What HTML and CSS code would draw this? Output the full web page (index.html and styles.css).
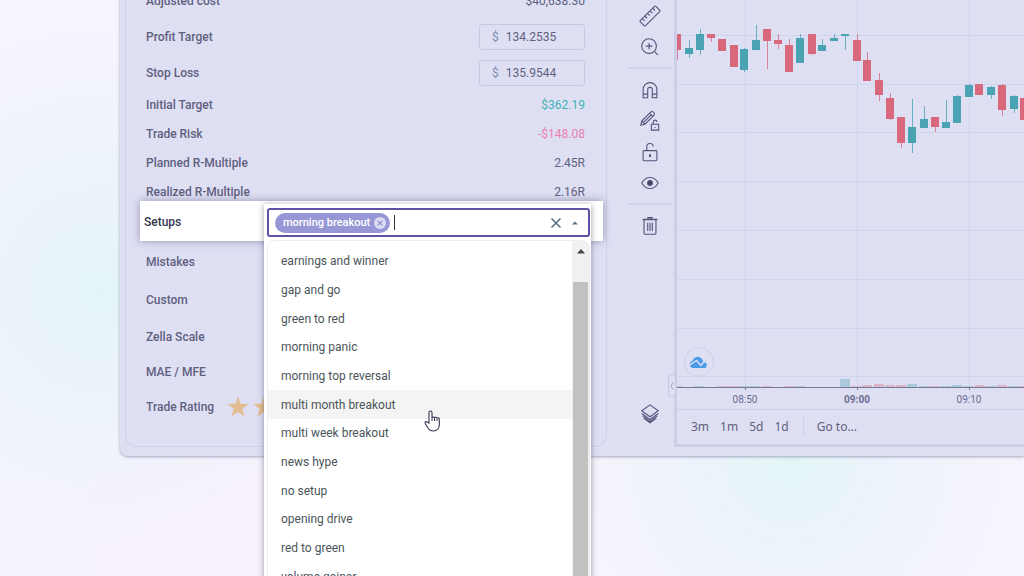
FILE: index.html
```
<!DOCTYPE html>
<html lang="en">
<head>
    <meta charset="UTF-8">
    <meta name="viewport" content="width=device-width, initial-scale=1.0">
    <title>Trade details</title>
    <link rel="stylesheet" href="styles.css">
</head>
<body>
    <div class="app">
        <section class="details">
            <div class="row">
                <span class="label">Adjusted cost</span>
                <span class="value">$40,638.30</span>
            </div>
            <div class="row row-input">
                <label class="label" for="profitTarget">Profit Target</label>
                <div class="money"><span>$</span><input type="text" id="profitTarget" value="134.2535"></div>
            </div>
            <div class="row row-input">
                <label class="label" for="stopLoss">Stop Loss</label>
                <div class="money"><span>$</span><input type="text" id="stopLoss" value="135.9544"></div>
            </div>
            <div class="row">
                <span class="label">Initial Target</span>
                <span class="value positive">$362.19</span>
            </div>
            <div class="row">
                <span class="label">Trade Risk</span>
                <span class="value negative">-$148.08</span>
            </div>
            <div class="row">
                <span class="label">Planned R-Multiple</span>
                <span class="value">2.45R</span>
            </div>
            <div class="row">
                <span class="label">Realized R-Multiple</span>
                <span class="value">2.16R</span>
            </div>

            <div class="setups">
                <label class="setups-label" for="setupSearch">Setups</label>
                <div class="picker">
                    <div class="picker-control">
                        <span class="chip">morning breakout
                            <button class="chip-remove" aria-label="Remove morning breakout">
                                <svg viewBox="0 0 12 12" width="12" height="12"><circle cx="6" cy="6" r="6" fill="#dcdcf5"/><path d="M3.6 3.6l4.8 4.8M8.4 3.6L3.6 8.4" stroke="#8f8fd0" stroke-width="1.3"/></svg>
                            </button>
                        </span>
                        <span class="caret"></span>
                        <input type="text" id="setupSearch" class="picker-input" autocomplete="off">
                        <button class="icon-button" aria-label="Clear">
                            <svg viewBox="0 0 12 12" width="12" height="12"><path d="M1.5 1.5l9 9M10.5 1.5l-9 9" stroke="#5b7080" stroke-width="1.6"/></svg>
                        </button>
                        <button class="icon-button" aria-label="Close list">
                            <svg viewBox="0 0 12 12" width="12" height="12"><path d="M3 7.5L6 4.5l3 3z" fill="#5b7080"/></svg>
                        </button>
                    </div>
                    <div class="picker-list">
                        <ul class="options" id="options" role="listbox" aria-label="Setups"></ul>
                        <div class="scrollbar">
                            <svg viewBox="0 0 10 6" width="10" height="6"><path d="M1 5.5L5 1l4 4.5z" fill="#444"/></svg>
                            <div class="thumb"></div>
                        </div>
                    </div>
                </div>
            </div>

            <div class="row row-tall"><span class="label">Mistakes</span></div>
            <div class="row row-tall"><span class="label">Custom</span></div>
            <div class="row row-field"><span class="label">Zella Scale</span></div>
            <div class="row row-mid"><span class="label">MAE / MFE</span></div>
            <div class="row row-field row-rating">
                <span class="label">Trade Rating</span>
                <div class="stars" id="stars"></div>
            </div>
        </section>

        <nav class="tools" aria-label="Drawing tools">
            <button class="tool" aria-label="Measure">
                <svg viewBox="0 0 24 24"><g transform="rotate(-45 12 12)"><rect x="0" y="8" width="24" height="8" rx="1.2"/><path d="M4 8v3.5M8 8v3.5M12 8v3.5M16 8v3.5M20 8v3.5"/></g></svg>
            </button>
            <button class="tool" aria-label="Zoom in">
                <svg viewBox="0 0 24 24"><circle cx="11" cy="11" r="8"/><path d="M17 17l3.500 3.500M11 7.500v7M7.500 11h7"/></svg>
            </button>
            <hr>
            <button class="tool" aria-label="Magnet">
                <svg viewBox="0 0 24 24"><path d="M4.500 20.500v-9a7.500 7.500 0 0 1 15 0v9h-5v-9a2.500 2.500 0 0 0-5 0v9zM4.500 16.500h5M14.500 16.500h5"/></svg>
            </button>
            <button class="tool" aria-label="Stay in drawing mode">
                <svg viewBox="0 0 24 24"><path d="M2 16.500l1-4.500L13 2q1.500-1 3 .5t.5 3L6.500 15.500zM3 12l3.500 3.500M11.500 3.500l3.500 3.500M4.700 13.800l8.500-8.500M13.500 15.500h8v6.500h-8zM15.500 15.500v-2.500a2 2 0 0 1 4 0M17.500 18.500v1"/></svg>
            </button>
            <button class="tool" aria-label="Lock drawings">
                <svg viewBox="0 0 24 24"><rect x="4.500" y="10.500" width="15" height="11" rx="1"/><path d="M8.500 10.500V6.500a3.500 3.500 0 0 1 7-.5"/><path d="M12 14.500v3" stroke-width="2.200"/></svg>
            </button>
            <button class="tool" aria-label="Hide drawings">
                <svg viewBox="0 0 24 24"><path d="M3 12c4.500-8 13.500-8 18 0-4.500 8-13.500 8-18 0z"/><circle cx="12" cy="12" r="2.600" fill="#3f3f63"/></svg>
            </button>
            <hr>
            <button class="tool" aria-label="Delete drawings">
                <svg viewBox="0 0 24 24"><path d="M4 5h16M9 3h6" stroke-width="1.700"/><path d="M5.500 5.500v14q0 1.500 1.500 1.500h10q1.500 0 1.500-1.500v-14M9.500 8.500v9M12 8.500v9M14.500 8.500v9"/></svg>
            </button>
            <button class="tool tool-last" aria-label="Object tree">
                <svg viewBox="0 0 24 24"><path d="M12 2l9 6.500-9 6.500-9-6.500z"/><path d="M3 11.500l9 6.500 9-6.500M4 14l8 6 8-6M5 16.500l7 5 7-5"/></svg>
            </button>
        </nav>

        <section class="chart">
            <button class="chart-handle" aria-label="Collapse panel">
                <svg viewBox="0 0 4 10" width="4" height="10"><path d="M3 1.500L1 5l2 3.500" fill="none" stroke="#a5a6c4"/></svg>
            </button>
            <svg class="plot" id="plot" role="img" aria-label="Price chart"></svg>
            <a class="chart-logo" href="#" aria-label="TradingView">
                <svg viewBox="0 0 20 12" width="20" height="12"><path d="M4 12A3.600 3.600 0 0 1 3.300 5 5.500 5.500 0 0 1 12.500 2.500L14 5a4 4 0 0 1 2.500 7z" fill="#4a9ce8"/><path d="M0 9.500l7.500-5 4.500 5 3-4 4 1" fill="none" stroke="#dedff3" stroke-width="1.400"/></svg>
            </a>
            <div class="ranges">
                <button>3m</button>
                <button>1m</button>
                <button>5d</button>
                <button>1d</button>
                <button class="goto">Go to...</button>
            </div>
        </section>
    </div>

    <script>
        const setups = [
            "earnings and winner", "gap and go", "green to red", "morning panic",
            "morning top reversal", "multi month breakout", "multi week breakout",
            "news hype", "no setup", "opening drive", "red to green", "volume gainer"
        ];
        const hovered = "multi month breakout";

        const pointer = `
            <svg class="pointer" viewBox="0 0 16 22" width="16" height="22">
                <path d="M5 13V2.500a1.500 1.500 0 0 1 3 0V8a1.300 1.300 0 0 1 2.500 0 1.300 1.300 0 0 1 2.500.5 1.200 1.200 0 0 1 2.300.5v6c0 3-2 6-6 6-3.500 0-4.500-1.500-6-4l-2-3.500c-.8-1.500.6-2.500 1.900-1.500z" fill="#fff" stroke="#34344e" stroke-width="1.100"/>
                <path d="M8 8v3M10.500 8.500V11M13 9v2" stroke="#34344e"/>
            </svg>`;

        document.getElementById('options').innerHTML = setups.map(name =>
            `<li role="option" class="option${name === hovered ? ' hovered' : ''}">${name}${name === hovered ? pointer : ''}</li>`
        ).join('');

        // Rating stars
        document.getElementById('stars').innerHTML = [1, 2, 3, 4, 5].map(n => `
            <button class="star" aria-label="Rate ${n}">
                <svg viewBox="0 0 22 22" width="22" height="22"><path d="M11 .5l2.600 7.300 7.900.2-6.200 4.800 2.200 7.700L11 16l-6.500 4.500 2.200-7.700L.5 8l7.900-.2z" fill="#e2bd90"/></svg>
            </button>`
        ).join('');

        // x, high, low, body top, body bottom, direction
        const candles = [
            [0, 34, 60, 34, 50, 'down'], [12, 40, 58, 48, 54, 'up'], [23, 29, 55, 34, 50, 'up'],
            [34, 34, 42, 34, 38, 'down'], [45, 39, 51, 39, 51, 'down'], [57, 45, 67, 45, 67, 'down'],
            [67, 48, 72, 49, 70, 'up'], [79, 25, 50, 40, 50, 'up'], [90, 29, 69, 29, 41, 'down'],
            [101, 34, 49, 40, 44, 'down'], [112, 39, 72, 45, 72, 'down'], [123, 34, 63, 38, 63, 'up'],
            [135, 34, 55, 34, 54, 'down'], [145, 39, 51, 45, 51, 'up'], [157, 34, 41, 38, 41, 'up'],
            [168, 34, 50, 34, 36, 'up'], [180, 34, 61, 40, 61, 'down'], [190, 52, 81, 60, 81, 'down'],
            [202, 73, 101, 80, 95, 'down'], [213, 93, 120, 98, 119, 'down'], [224, 117, 148, 117, 143, 'down'],
            [235, 99, 153, 127, 143, 'up'], [247, 106, 128, 119, 128, 'up'], [258, 117, 132, 117, 127, 'down'],
            [269, 100, 128, 122, 128, 'up'], [280, 95, 123, 96, 123, 'up'], [292, 84, 97, 85, 97, 'up'],
            [302, 84, 95, 84, 95, 'down'], [314, 86, 99, 87, 95, 'up'], [325, 84, 116, 85, 110, 'down'],
            [337, 95, 113, 96, 109, 'up'], [347, 98, 120, 98, 120, 'down']
        ];

        // x, height, direction
        const volumes = [
            [0, 1, 'down'], [22, 1, 'up'], [45, 1, 'down'], [56, 1, 'down'], [67, 1, 'up'], [78, 1, 'up'],
            [90, 1, 'down'], [112, 1, 'down'], [123, 1, 'up'], [168, 8, 'up'], [179, 1, 'down'],
            [190, 2, 'down'], [202, 3, 'down'], [213, 2, 'down'], [224, 2, 'down'], [235, 3, 'up'],
            [247, 1, 'up'], [258, 1, 'down'], [269, 1, 'up'], [280, 2, 'up'], [291, 1, 'up'],
            [303, 2, 'down'], [314, 1, 'up'], [325, 2, 'down'], [336, 1, 'up'], [347, 1, 'down']
        ];

        const times = [[68, '08:50', ''], [180, '09:00', 'strong'], [292, '09:10', '']];
        const levels = [35, 84, 132, 181, 230, 279, 328, 376];

        let plot = '';
        levels.forEach(y => plot += `<rect class="grid" x="0" y="${y}" width="100%" height="1"/>`);
        times.forEach(([x]) => plot += `<rect class="grid" x="${x}" y="0" width="1" height="387"/>`);
        volumes.forEach(([x, h, dir]) => plot += `<rect class="volume ${dir}" x="${x - 5}" y="${387 - h}" width="10" height="${h}"/>`);
        candles.forEach(([x, high, low, top, bottom, dir]) => {
            plot += `<rect class="wick ${dir}" x="${x}" y="${high}" width="1" height="${low - high}"/>`;
            plot += `<rect class="${dir}" x="${x - 4}" y="${top}" width="8" height="${bottom - top}"/>`;
        });
        plot += `<rect class="axis" x="0" y="387" width="100%" height="1"/>`;
        times.forEach(([x, text, cls]) => {
            plot += `<rect class="axis" x="${x}" y="387" width="1" height="3"/>`;
            plot += `<text class="time ${cls}" x="${x}" y="403">${text}</text>`;
        });
        document.getElementById('plot').innerHTML = plot;
    </script>
</body>
</html>
```
FILE: styles.css
```
* {
    box-sizing: border-box;
    margin: 0;
    padding: 0;
}

body {
    height: 100vh;
    overflow: hidden;
    font-family: Roboto, "Liberation Sans", sans-serif;
    font-size: 12px;
    color: #5f617f;
    background:
        radial-gradient(circle at 100px 290px, #e3f4f7 0, rgba(232, 243, 250, 0.8) 90px, rgba(240, 242, 252, 0) 260px),
        radial-gradient(circle at 790px 460px, #e3f5f7 0, rgba(236, 243, 251, 0.8) 110px, rgba(240, 242, 252, 0) 210px),
        radial-gradient(circle at 240px 540px, #f8f1fd 0, rgba(248, 241, 253, 0) 260px),
        #f6f4fc;
}

button {
    font: inherit;
    color: inherit;
    background: none;
    border: none;
    cursor: pointer;
}

input {
    font: inherit;
    color: inherit;
    background: none;
    border: none;
    outline: none;
    min-width: 0;
}

svg {
    display: block;
}

/* the page is scrolled a little, so the first row is cut off */
.app {
    display: flex;
    margin: -14px 0 0 120px;
    padding: 0 0 9px 5px;
    background: #dedff3;
    border-radius: 0 0 0 8px;
    box-shadow: 0 1px 3px rgba(70, 70, 110, 0.45);
}

/* Trade details */
.details {
    flex: 0 0 482px;
    padding-bottom: 21px;
    border: 1px solid #d0d1e8;
    border-top: none;
    border-radius: 0 0 12px 12px;
}

.row {
    display: flex;
    align-items: center;
    justify-content: space-between;
    height: 29px;
    padding: 0 21px 0 20px;
}

.row:first-child {
    margin-bottom: 3px;
}

.row-field,
.row-input {
    height: 36px;
}

.row-input {
    padding-top: 2px;
}

.row-tall {
    height: 38px;
}

.row-mid {
    height: 34px;
}

.label {
    font-weight: 500;
}

.positive {
    color: #3fb3b8;
}

.negative {
    color: #e77fb0;
}

.money {
    display: flex;
    align-items: center;
    gap: 7px;
    width: 106px;
    height: 26px;
    padding: 0 12px;
    border: 1px solid #c8c9e0;
    border-radius: 3px;
}

.money span {
    color: #7d8db5;
}

.money input {
    width: 100%;
}

.row-rating {
    justify-content: flex-start;
    gap: 13px;
}

.stars {
    display: flex;
    gap: 4px;
}

/* Setups */
.setups {
    position: relative;
    z-index: 2;
    display: flex;
    align-items: center;
    height: 40px;
    margin: -5px 3px 2px 14px;
    padding: 1px 4px 0;
    background: #fff;
    box-shadow: 0 0 8px rgba(60, 60, 100, 0.45);
}

.setups-label {
    font-weight: 500;
    color: #34384f;
}

.picker {
    position: absolute;
    top: 3px;
    left: 124px;
    right: 12px;
    padding: 4px 1px 0 3px;
    background: #fff;
    box-shadow: 0 1px 6px rgba(60, 60, 90, 0.5);
}

.picker-control {
    display: flex;
    align-items: center;
    height: 29px;
    padding: 0 6px;
    border: 2px solid #6250a5;
    border-radius: 3px;
}

.chip {
    display: flex;
    align-items: center;
    gap: 4px;
    height: 20px;
    padding: 0 4px 0 8px;
    border-radius: 10px;
    background: #9797d6;
    color: #fff;
    font-size: 11px;
    font-weight: 500;
    white-space: nowrap;
}

.caret {
    width: 1px;
    height: 15px;
    margin-left: 4px;
    background: #333;
}

.picker-input {
    flex: 1;
}

.icon-button {
    padding: 0 4px;
}

.icon-button + .icon-button {
    padding: 0 1px 0 3px;
}

.picker-list {
    display: flex;
    margin-top: 3px;
    border: 1px solid #ececf0;
    border-radius: 8px 8px 0 0;
    overflow: hidden;
}

.options {
    flex: 1;
    display: grid;
    grid-template-rows: repeat(12, 1fr);
    height: 350px;
    padding-top: 6px;
    list-style: none;
    color: #4b5559;
}

.option {
    position: relative;
    display: flex;
    align-items: center;
    padding: 0 13px;
}

.hovered {
    background: #f4f4f4;
}

.pointer {
    position: absolute;
    left: 156px;
    top: 20px;
    z-index: 1;
}

.scrollbar {
    display: flex;
    flex-direction: column;
    align-items: center;
    width: 17px;
    padding: 7px 1px 0;
    background: #f0f0f0;
}

.thumb {
    flex: 1;
    width: 15px;
    margin-top: 28px;
    background: #c1c1c1;
}

/* Drawing tools */
.tools {
    flex: 0 0 67px;
    display: flex;
    flex-direction: column;
    align-items: center;
    padding: 14px 2px 18px 21px;
}

.tools hr {
    width: 100%;
    height: 2px;
    margin: 5px 0;
    border: none;
    background: #cfd0ea;
}

.tool {
    display: grid;
    place-items: center;
    height: 31px;
    width: 31px;
}

.tool svg {
    width: 22px;
    height: 22px;
    fill: none;
    stroke: #53547a;
    stroke-width: 1.2;
}

.tool-last {
    margin-top: auto;
}

/* Chart */
.chart {
    position: relative;
    flex: 1;
    min-width: 0;
    padding-top: 14px;
    border-left: 3px solid #cdcde8;
    border-bottom: 3px solid #cdcde8;
}

.plot {
    width: 100%;
    height: 409px;
}

.grid {
    fill: #cfd5ec;
}

.up {
    fill: #4aa3b3;
}

.down {
    fill: #d8697d;
}

.wick {
    opacity: 0.8;
}

.volume {
    opacity: 0.35;
}

.axis {
    fill: #77789a;
}

.time {
    font-size: 10px;
    fill: #6b6c8e;
    text-anchor: middle;
}

.strong {
    font-weight: 700;
}

.chart-logo {
    position: absolute;
    left: 7px;
    bottom: 67px;
    display: grid;
    place-items: center;
    width: 30px;
    height: 30px;
    border: 1px solid #cdcfe5;
    border-radius: 50%;
}

.chart-handle {
    position: absolute;
    left: -9px;
    bottom: 47px;
    display: grid;
    place-items: center;
    width: 8px;
    height: 23px;
    background: #dedff3;
    border: 1px solid #c6c8e2;
    border-radius: 3px;
}

.ranges {
    display: flex;
    align-items: center;
    gap: 11px;
    height: 34px;
    padding-left: 14px;
    border-top: 1px solid #cdcfe6;
    font-family: "Noto Sans", sans-serif;
    font-size: 12px;
}

.goto {
    height: 20px;
    padding-left: 13px;
    margin-left: 3px;
    border-left: 1px solid #cdcfe6;
}
```
